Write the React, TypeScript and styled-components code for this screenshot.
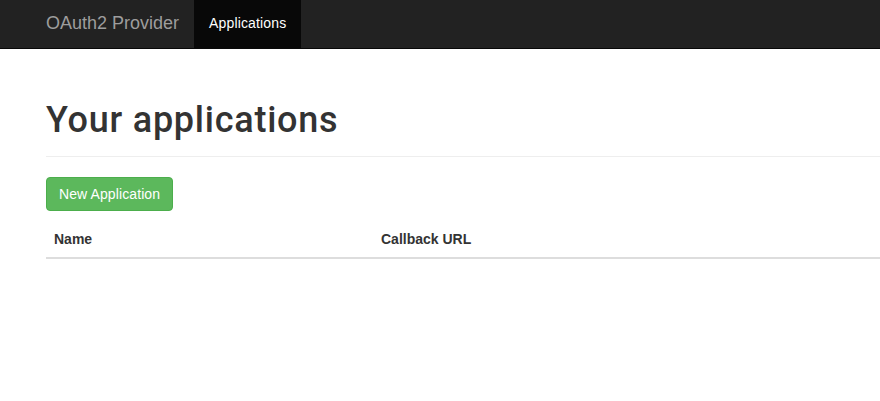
import React from "react";
import styled, { createGlobalStyle } from "styled-components";

const Global = createGlobalStyle`
  html, body { margin: 0; padding: 0; background: #fff; }
  body {
    font-family: "Liberation Sans", Arial, Helvetica, sans-serif;
    font-size: 14px;
    line-height: 1.42857;
    color: #333;
    overflow: hidden;
  }
  * { box-sizing: border-box; }
`;

const Navbar = styled.nav`
  height: 49px;
  background: #222;
  border-bottom: 1px solid #080808;
  display: flex;
  align-items: stretch;
  padding-left: 31px;
`;

const Brand = styled.a`
  display: flex;
  align-items: center;
  padding: 0 15px;
  font-size: 18px;
  color: #9d9d9d;
  text-decoration: none;
`;

const NavItem = styled.a<{ $active?: boolean }>`
  display: flex;
  align-items: center;
  padding: 0 15px;
  font-size: 14px;
  letter-spacing: 0.15px;
  color: ${(p) => (p.$active ? "#fff" : "#9d9d9d")};
  background: ${(p) => (p.$active ? "#080808" : "transparent")};
  text-decoration: none;
`;

const Container = styled.main`
  padding-left: 46px;
  width: 1200px;
`;

const PageHeader = styled.div`
  margin-top: 52px;
  padding-bottom: 9px;
  border-bottom: 1px solid #eee;
`;

const Title = styled.h1`
  margin: 20px 0 6px;
  font-family: Roboto, "Liberation Sans", Arial, sans-serif;
  font-size: 36px;
  font-weight: 500;
  line-height: 1.1;
  letter-spacing: 0.75px;
  color: #333;
`;

const Button = styled.button`
  margin-top: 20px;
  display: inline-block;
  height: 34px;
  padding: 6px 12px;
  font-family: inherit;
  font-size: 14px;
  line-height: 20px;
  letter-spacing: 0.1px;
  color: #fff;
  background: #5cb85c;
  border: 1px solid #4cae4c;
  border-radius: 4px;
`;

const Table = styled.table`
  margin-top: 10px;
  width: 100%;
  border-collapse: collapse;
`;

const Th = styled.th<{ $w?: number }>`
  text-align: left;
  padding: 8px;
  font-weight: bold;
  line-height: 20px;
  border-bottom: 2px solid #ddd;
  width: ${(p) => (p.$w ? `${p.$w}px` : "auto")};
`;

export default function App() {
  return (
    <>
      <Global />
      <Navbar>
        <Brand href="#">OAuth2 Provider</Brand>
        <NavItem href="#" $active>
          Applications
        </NavItem>
      </Navbar>
      <Container>
        <PageHeader>
          <Title>Your applications</Title>
        </PageHeader>
        <Button>New Application</Button>
        <Table>
          <thead>
            <tr>
              <Th $w={327}>Name</Th>
              <Th>Callback URL</Th>
            </tr>
          </thead>
        </Table>
      </Container>
    </>
  );
}
